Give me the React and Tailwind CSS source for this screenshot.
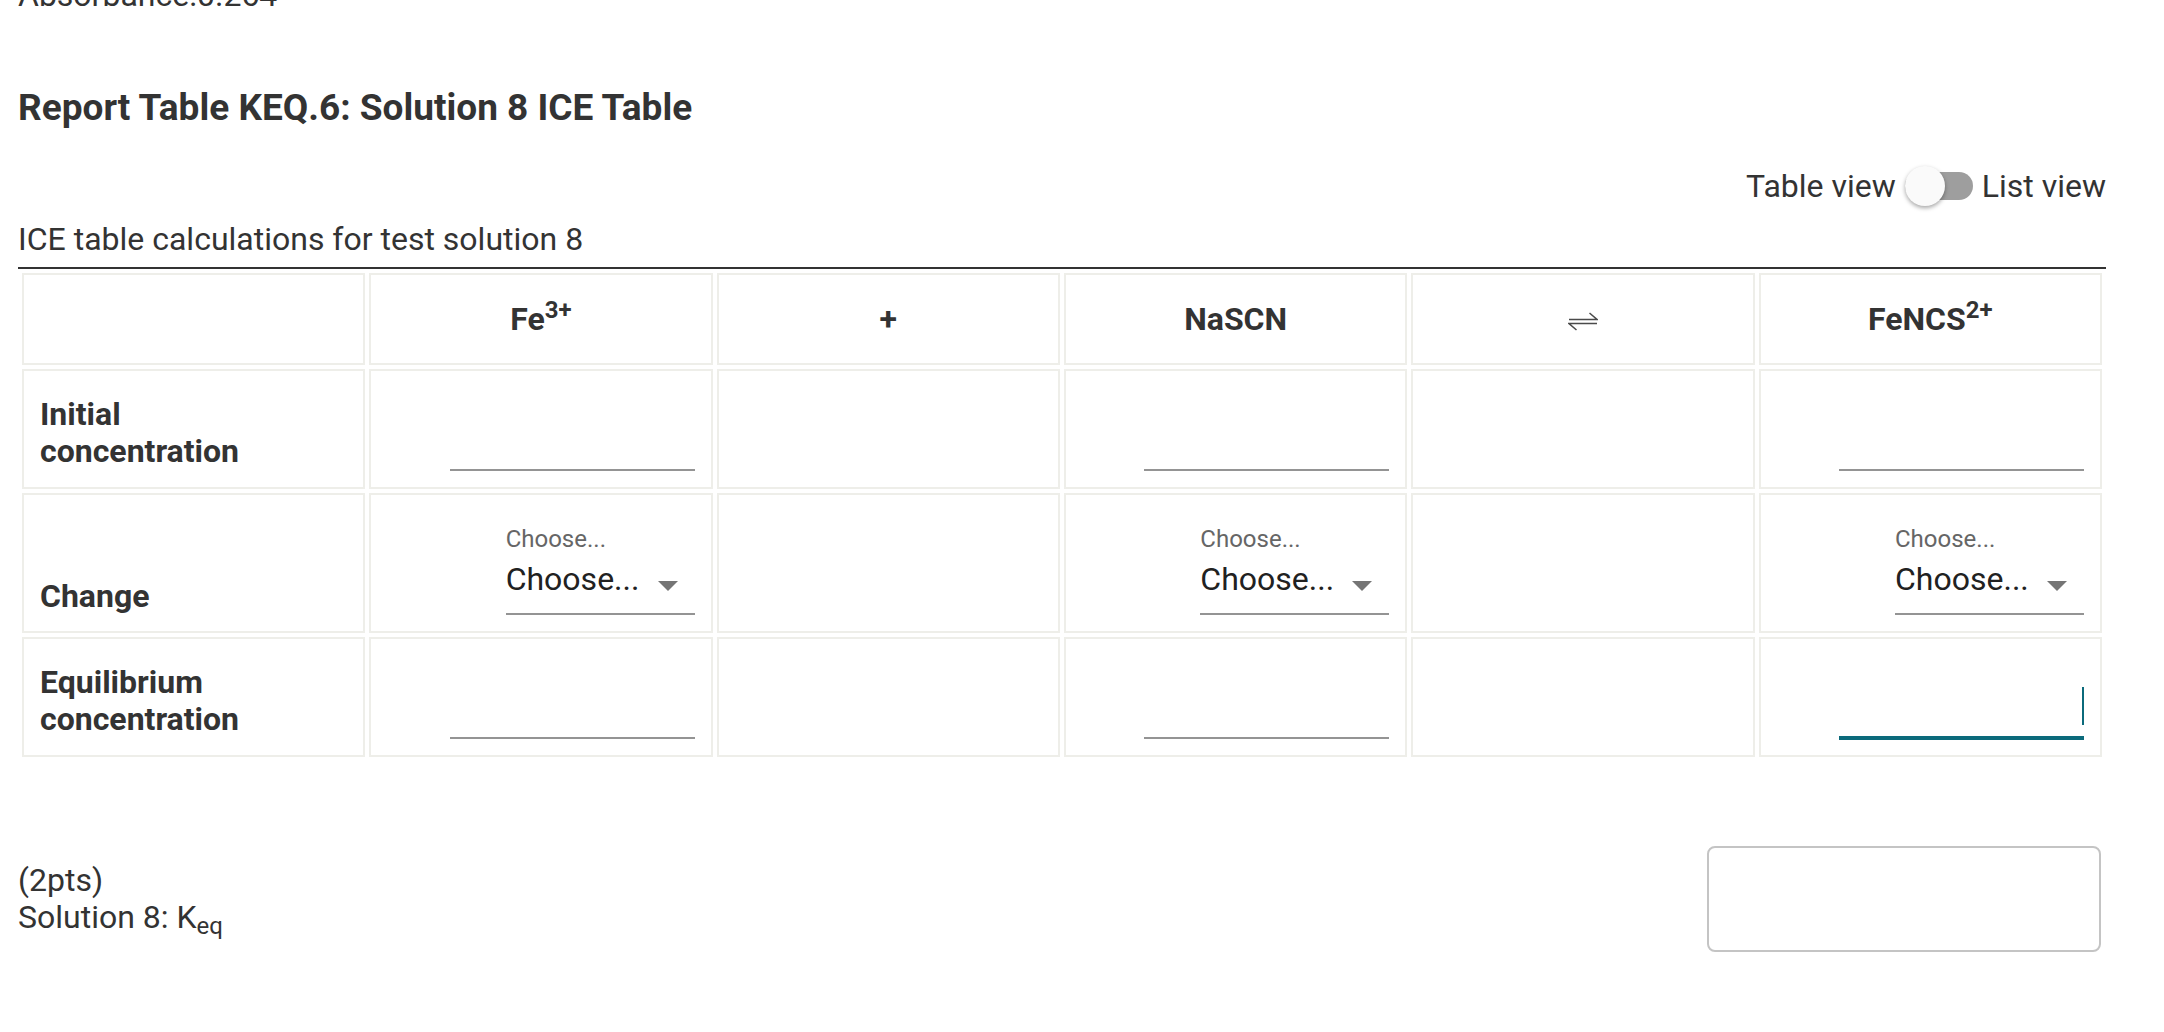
import React from 'react';

const font = { fontFamily: 'Roboto, "Noto Sans", "Liberation Sans", sans-serif' };

function EqArrows() {
  return (
    <svg width="30" height="19" viewBox="0 0 30 19" fill="none" stroke="#4a4a4a" strokeWidth="1.5" className="inline-block">
      <path d="M1 7.5 H29 L21.5 1" />
      <path d="M29 11.5 H1 L8.5 18" />
    </svg>
  );
}

function Toggle() {
  return (
    <div className="relative w-[68px] h-[40px]">
      <div className="absolute left-0 right-0 top-[6px] h-[28px] rounded-full bg-[#9e9e9e]" />
      <div className="absolute left-0 top-0 w-[40px] h-[40px] rounded-full bg-[#fafafa] shadow-[0_2px_4px_rgba(0,0,0,0.35)]" />
    </div>
  );
}

function Field({ focused }) {
  return (
    <div className="relative ml-auto w-[245px] h-[40px] border-b-2 border-[#949494]">
      {focused && (
        <>
          <div className="absolute left-0 right-0 bottom-[-3px] h-[4px] bg-[#0b6a7b]" />
          <div className="absolute right-0 bottom-[12px] w-[2px] h-[38px] bg-[#0b6a7b]" />
        </>
      )}
    </div>
  );
}

function Choose() {
  return (
    <div className="ml-auto w-[189px]">
      <div className="text-[24px] leading-[28px] text-[#666]">Choose...</div>
      <div className="mt-[8px] flex items-center pb-[15px] border-b-2 border-[#949494]">
        <span className="text-[32px] leading-[37px] text-[#212121]">Choose...</span>
        <svg width="20" height="10" viewBox="0 0 20 10" className="ml-auto mr-[17px] mt-[12px]">
          <path d="M0 0 H20 L10 10 Z" fill="#757575" />
        </svg>
      </div>
    </div>
  );
}

const cell = 'border-2 border-[#eeeee9] px-4';

export default function App() {
  return (
    <div className="bg-white min-h-[1032px] text-[#333]" style={font}>
      <div className="pl-[18px] w-[2106px]">
        <div className="h-[14px] overflow-hidden flex items-end">
          <span className="text-[32px] leading-[37px] whitespace-nowrap">Absorbance:0.264</span>
        </div>

        <h2 className="mt-[72px] text-[37px] leading-[44px] font-bold">Report Table KEQ.6: Solution 8 ICE Table</h2>

        <div className="mt-[36px] flex items-center justify-end gap-[9px] text-[32px] leading-[37px]">
          <span>Table view</span>
          <Toggle />
          <span>List view</span>
        </div>

        <div className="mt-[15px] text-[32px] leading-[37px] pb-[9px] border-b-2 border-[#333]">
          ICE table calculations for test solution 8
        </div>

        <table className="w-full table-fixed border-separate border-spacing-[4px] text-[32px] leading-[37px]">
          <tbody>
            <tr>
              <td className={`${cell} h-[92px]`} />
              <td className={`${cell} h-[92px] text-center font-bold`}>Fe<sup>3+</sup></td>
              <td className={`${cell} h-[92px] text-center font-bold`}>+</td>
              <td className={`${cell} h-[92px] text-center font-bold`}>NaSCN</td>
              <td className={`${cell} h-[92px] text-center`}><EqArrows /></td>
              <td className={`${cell} h-[92px] text-center font-bold`}>FeNCS<sup>2+</sup></td>
            </tr>
            <tr>
              <td className={`${cell} h-[120px] pt-[8px] font-bold align-middle`}>Initial<br />concentration</td>
              <td className={`${cell} h-[120px] pb-4 align-bottom`}><Field /></td>
              <td className={`${cell} h-[120px]`} />
              <td className={`${cell} h-[120px] pb-4 align-bottom`}><Field /></td>
              <td className={`${cell} h-[120px]`} />
              <td className={`${cell} h-[120px] pb-4 align-bottom`}><Field /></td>
            </tr>
            <tr>
              <td className={`${cell} h-[140px] pb-4 font-bold align-bottom`}>Change</td>
              <td className={`${cell} h-[140px] pb-4 align-bottom`}><Choose /></td>
              <td className={`${cell} h-[140px]`} />
              <td className={`${cell} h-[140px] pb-4 align-bottom`}><Choose /></td>
              <td className={`${cell} h-[140px]`} />
              <td className={`${cell} h-[140px] pb-4 align-bottom`}><Choose /></td>
            </tr>
            <tr>
              <td className={`${cell} h-[120px] pt-[8px] font-bold align-middle`}>Equilibrium<br />concentration</td>
              <td className={`${cell} h-[120px] pb-4 align-bottom`}><Field /></td>
              <td className={`${cell} h-[120px]`} />
              <td className={`${cell} h-[120px] pb-4 align-bottom`}><Field /></td>
              <td className={`${cell} h-[120px]`} />
              <td className={`${cell} h-[120px] pb-4 align-bottom`}><Field focused /></td>
            </tr>
          </tbody>
        </table>

        <div className="mt-[85px] flex items-center justify-between">
          <div className="text-[32px] leading-[37px]">
            <div>(2pts)</div>
            <div>Solution 8: K<sub>eq</sub></div>
          </div>
          <div className="mr-[5px] w-[394px] h-[106px] border-2 border-[#c4c4c4] rounded-[8px]" />
        </div>
      </div>
    </div>
  );
}
